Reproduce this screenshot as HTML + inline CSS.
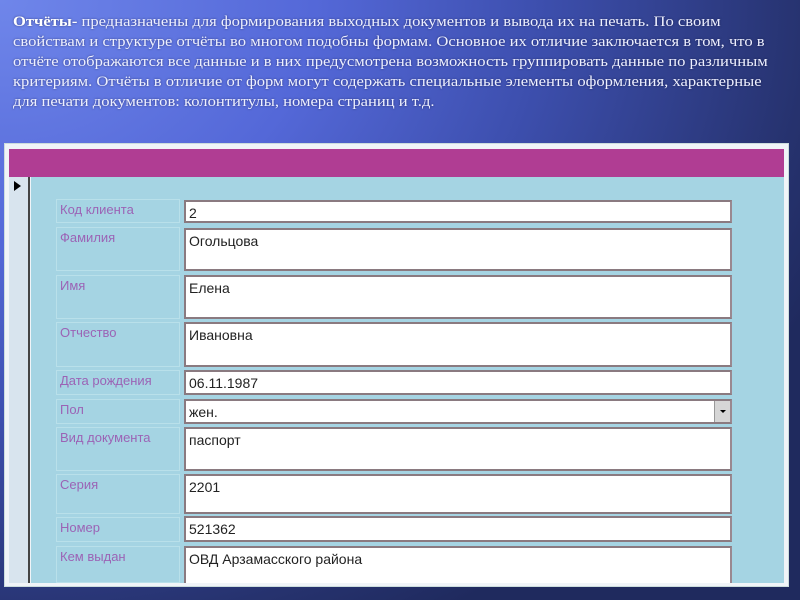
<!DOCTYPE html>
<html><head><meta charset="utf-8"><style>
*{margin:0;padding:0;box-sizing:border-box}
body{width:800px;height:600px;overflow:hidden;position:relative;
background:radial-gradient(ellipse 900px 700px at 0px 0px,#6f86ea 0%,#5468d8 35%,#3d4fae 60%,#26326e 90%,#1f2a5e 100%);
font-family:"Liberation Sans",sans-serif}
.txt{position:absolute;left:13px;top:12px;white-space:nowrap;font-family:"Liberation Serif","DejaVu Serif",serif;font-size:15px;line-height:20px;color:#eef0ff;text-shadow:0 0 2px rgba(0,0,40,.5);transform:scaleX(1.105);transform-origin:0 0}
.txt b{color:#fff}
.frame{position:absolute;left:4px;top:143px;width:785px;height:444px;background:#f0f4f8;border:1px solid #cdd}
.head{position:absolute;left:9px;top:149px;width:775px;height:28px;background:#b03d93}
.sel{position:absolute;left:9px;top:177px;width:21px;height:406px;background:#d8e4ee;border-right:2px solid #444}
.sel:before{content:"";position:absolute;left:5px;top:4px;border-left:7px solid #000;border-top:5px solid transparent;border-bottom:5px solid transparent}
.body{position:absolute;left:31px;top:177px;width:753px;height:406px;background:#a5d4e3}
.l{position:absolute;left:56px;width:124px;border:1px solid #b9e0ea;color:#9b63b5;font-size:13px;padding:2px 3px;line-height:16px}
.f{position:absolute;left:184px;width:548px;background:#fff;border:2px solid #8a7a80;border-right-color:#9a8890;color:#222;font-size:14px;padding:2px 3px;line-height:18px}
.dd{position:absolute;right:0;top:0;width:16px;height:100%;background:#d6d6d6;border-left:1px solid #999}
.dd:after{content:"";position:absolute;left:5px;top:9px;border-top:3px solid #000;border-left:3px solid transparent;border-right:3px solid transparent}
</style></head><body>
<div class="txt"><b>Отчёты-</b> предназначены для формирования выходных документов и вывода их на печать. По своим<br>свойствам и структуре отчёты во многом подобны формам. Основное их отличие заключается в том, что в<br>отчёте отображаются все данные и в них предусмотрена возможность группировать данные по различным<br>критериям. Отчёты в отличие от форм могут содержать специальные элементы оформления, характерные<br>для печати документов: колонтитулы, номера страниц и т.д.</div>
<div class="frame"></div>
<div class="head"></div>
<div class="sel"></div>
<div class="body"></div>

<div class="l" style="top:199px;height:24px">Код клиента</div><div class="f" style="top:200px;height:23px">2</div>
<div class="l" style="top:227px;height:44px">Фамилия</div><div class="f" style="top:228px;height:43px">Огольцова</div>
<div class="l" style="top:275px;height:44px">Имя</div><div class="f" style="top:275px;height:44px">Елена</div>
<div class="l" style="top:322px;height:45px">Отчество</div><div class="f" style="top:322px;height:45px">Ивановна</div>
<div class="l" style="top:370px;height:25px">Дата рождения</div><div class="f" style="top:370px;height:25px">06.11.1987</div>
<div class="l" style="top:399px;height:25px">Пол</div><div class="f" style="top:399px;height:25px">жен.<div class="dd"></div></div>
<div class="l" style="top:427px;height:44px">Вид документа</div><div class="f" style="top:427px;height:44px">паспорт</div>
<div class="l" style="top:474px;height:40px">Серия</div><div class="f" style="top:474px;height:40px">2201</div>
<div class="l" style="top:517px;height:25px">Номер</div><div class="f" style="top:516px;height:26px">521362</div>
<div class="l" style="top:546px;height:37px">Кем выдан</div><div class="f" style="top:546px;height:37px;border-bottom:none">ОВД Арзамасского района</div>
</body></html>
